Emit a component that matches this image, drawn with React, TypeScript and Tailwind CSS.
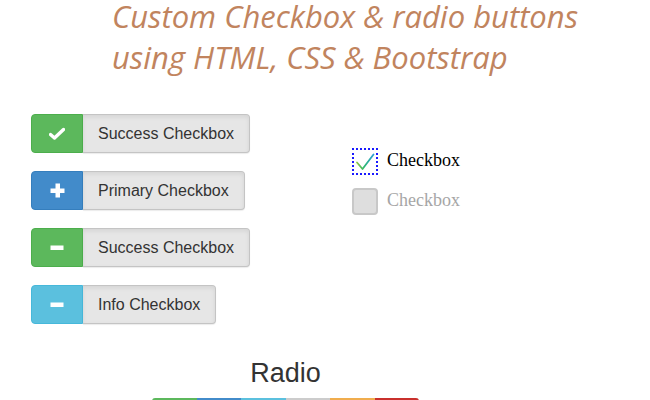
import React from 'react';

type Kind = 'success' | 'primary' | 'info';

const kindBg: Record<Kind, string> = {
  success: 'bg-[#5cb85c] border-[#4cae4c]',
  primary: 'bg-[#428bca] border-[#357ebd]',
  info: 'bg-[#5bc0de] border-[#46b8da]',
};

function CheckIcon() {
  return (
    <svg width="16" height="14" viewBox="0 0 16 14">
      <path d="M1.5 7.5 L5.5 11 L14.5 2.5" fill="none" stroke="#fff" strokeWidth="3.4" strokeLinecap="round" strokeLinejoin="round" />
    </svg>
  );
}

function PlusIcon() {
  return (
    <svg width="15" height="15" viewBox="0 0 15 15">
      <rect x="5.5" y="0.5" width="4.5" height="14" fill="#fff" />
      <rect x="0.5" y="5.5" width="14" height="4.5" fill="#fff" />
    </svg>
  );
}

function MinusIcon() {
  return (
    <svg width="14" height="6" viewBox="0 0 14 6">
      <rect x="0.5" y="0.5" width="13" height="4.5" fill="#fff" />
    </svg>
  );
}

function FancyCheckbox({ kind, icon, label }: { kind: Kind; icon: React.ReactNode; label: string }) {
  return (
    <div className="flex h-[39px] w-fit">
      <span className={`flex w-[52px] items-center justify-center rounded-l-[4px] border ${kindBg[kind]}`}>
        {icon}
      </span>
      <span className="flex items-center rounded-r-[4px] border border-l-0 border-[#c4c4c4] bg-[#e6e6e6] px-[15px] text-[16px] text-[#333] shadow-[inset_0_2px_4px_rgba(0,0,0,0.08),0_1px_1px_rgba(0,0,0,0.08)]">
        {label}
      </span>
    </div>
  );
}

function PlainCheckbox({ checked, disabled }: { checked?: boolean; disabled?: boolean }) {
  return (
    <label className="flex items-center gap-[9px]">
      {checked ? (
        <span className="flex h-[27px] w-[26px] items-center justify-center border-2 border-dotted border-[#1a1aff]">
          <svg width="20" height="18" viewBox="0 0 20 18">
            <defs>
              <linearGradient id="chk" x1="0" y1="0" x2="1" y2="0">
                <stop offset="0" stopColor="#8cc63f" />
                <stop offset="0.45" stopColor="#2bb673" />
                <stop offset="1" stopColor="#2a9fd6" />
              </linearGradient>
            </defs>
            <path d="M2 9.5 L7.5 16 L18.5 1.5" fill="none" stroke="url(#chk)" strokeWidth="1.8" strokeLinecap="round" strokeLinejoin="round" />
          </svg>
        </span>
      ) : (
        <span className="h-[27px] w-[26px] rounded-[4px] border-2 border-[#c8c8c8] bg-[#dedede]" />
      )}
      <span
        className={`-mt-[4px] text-[18px] leading-[20px] ${disabled ? 'text-[#a6a6a6]' : 'text-black'}`}
        style={{ fontFamily: '"Liberation Serif", "Times New Roman", serif' }}
      >
        Checkbox
      </span>
    </label>
  );
}

const radioColors = ['bg-[#5cb85c]', 'bg-[#428bca]', 'bg-[#5bc0de]', 'bg-[#cccccc]', 'bg-[#f0ad4e]', 'bg-[#c9302c]'];

export default function App() {
  return (
    <div
      className="h-[400px] w-[650px] overflow-hidden bg-white"
      style={{ fontFamily: '"Liberation Sans", Arial, sans-serif' }}
    >
      <h1
        className="flex flex-col gap-[9px] pl-[112px] text-[31px] font-normal italic leading-[32px] text-[#c1845e]"
        style={{ fontFamily: '"Open Sans", sans-serif' }}
      >
        <span>Custom Checkbox &amp; radio buttons</span>
        <span>using HTML, CSS &amp; Bootstrap</span>
      </h1>

      <div className="mt-[41px] flex pl-[31px]">
        <div className="flex w-[321px] flex-col gap-[18px]">
          <FancyCheckbox kind="success" icon={<CheckIcon />} label="Success Checkbox" />
          <FancyCheckbox kind="primary" icon={<PlusIcon />} label="Primary Checkbox" />
          <FancyCheckbox kind="success" icon={<MinusIcon />} label="Success Checkbox" />
          <FancyCheckbox kind="info" icon={<MinusIcon />} label="Info Checkbox" />
        </div>
        <div className="mt-[34px] flex flex-col gap-[13px]">
          <PlainCheckbox checked />
          <PlainCheckbox disabled />
        </div>
      </div>

      <div className="mt-[34px] flex w-[571px] flex-col items-center">
        <h3 className="text-[27px] leading-[30px] text-[#333]">Radio</h3>
        <div className="mt-[10px] flex">
          {radioColors.map((c, i) => (
            <div
              key={i}
              className={`h-[30px] w-[44.5px] ${c} ${i === 0 ? 'rounded-tl-[3px]' : ''} ${i === radioColors.length - 1 ? 'rounded-tr-[3px]' : ''}`}
            />
          ))}
        </div>
      </div>
    </div>
  );
}
